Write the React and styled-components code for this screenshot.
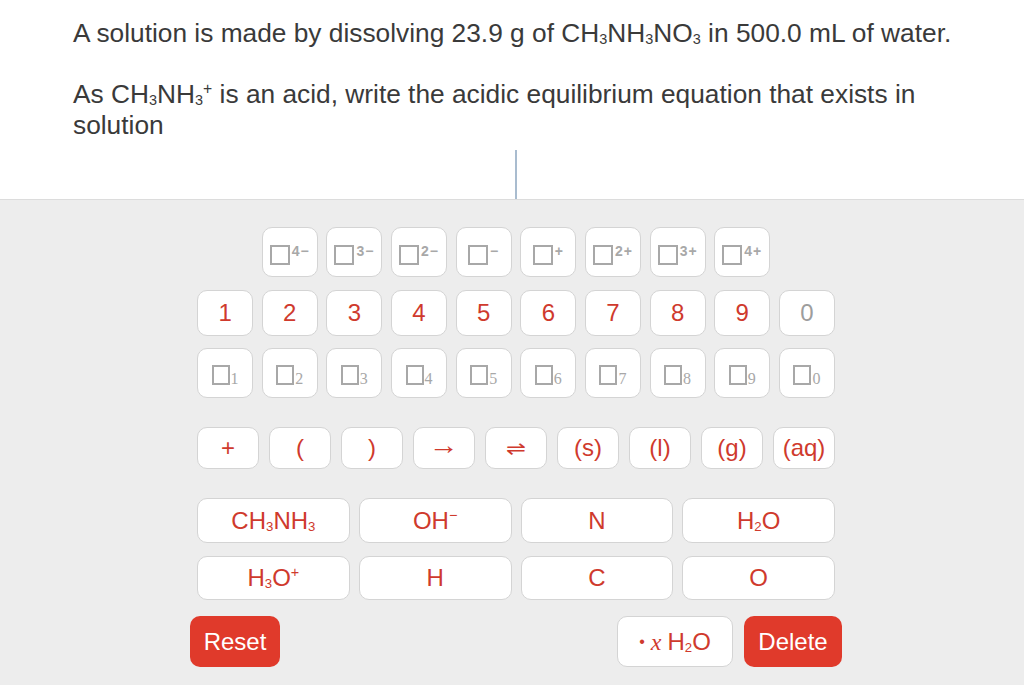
import React from 'react';
import styled, { createGlobalStyle } from 'styled-components';

const RED = '#cf3a2d';
const GREY = '#9d9d9d';

const GlobalStyle = createGlobalStyle`
  body {
    margin: 0;
    background: #fff;
    font-family: "Liberation Sans", Arial, sans-serif;
  }
`;

const Question = styled.div`
  padding: 18px 60px 0 73px;
  color: #3a3a3a;
  font-size: 26.3px;
  line-height: 31px;
`;

const Para = styled.p`
  margin: 0 0 ${(p) => p.$gap || 0}px;
`;

const Sub = styled.span`
  font-size: 0.55em;
  line-height: 0;
  vertical-align: -0.12em;
`;

const Sup = styled.span`
  font-size: 0.6em;
  line-height: 0;
  vertical-align: 0.6em;
`;

const AnswerArea = styled.div`
  height: 58px;
  padding-left: 8px;
  display: flex;
  justify-content: center;
  align-items: flex-end;
`;

const Cursor = styled.div`
  width: 2px;
  height: 49px;
  background: #a9bccf;
`;

const Panel = styled.div`
  background: #ededed;
  border-top: 1px solid #dcdcdc;
  min-height: 486px;
  box-sizing: border-box;
  padding: 27px 0 0 8px;
`;

const Keypad = styled.div`
  width: 638px;
  margin: 0 auto;
  display: flex;
  flex-direction: column;
`;

const Row = styled.div`
  display: grid;
  grid-template-columns: repeat(${(p) => p.$cols}, 1fr);
  column-gap: ${(p) => p.$gap}px;
  height: ${(p) => p.$h}px;
  margin-top: ${(p) => p.$mt || 0}px;
`;

const Key = styled.button`
  background: #fff;
  border: 1px solid #d4d4d4;
  border-radius: 10px;
  padding: 0;
  margin: 0;
  display: flex;
  align-items: center;
  justify-content: center;
  color: ${(p) => p.$color || RED};
  font-family: "Liberation Sans", Arial, sans-serif;
  font-size: 24px;
  line-height: 1;
  &:first-child {
    grid-column-start: ${(p) => p.$start || 'auto'};
  }
`;

const Label = styled.span`
  white-space: nowrap;
`;

const Box = styled.span`
  display: inline-block;
  width: ${(p) => p.$w || 20}px;
  height: 20px;
  border: 2px solid #a8a8a8;
  box-sizing: border-box;
`;

const ChargeMark = styled.span`
  align-self: flex-start;
  margin-top: -1px;
  margin-left: 2px;
  font-size: 14px;
  font-weight: bold;
  color: #a8a8a8;
  letter-spacing: 1px;
`;

const ChargeInner = styled.span`
  display: inline-flex;
  align-items: flex-start;
  margin-top: 5px;
`;

const IndexInner = styled.span`
  display: inline-flex;
  align-items: flex-end;
  margin-top: 4px;
`;

const IndexMark = styled.span`
  font-family: "Liberation Serif", "Times New Roman", serif;
  font-size: 16px;
  color: #a8a8a8;
  margin-left: 1px;
  position: relative;
  top: 2px;
`;

const Arrow = styled.span`
  font-family: ${(p) => (p.$serif ? '"Liberation Serif", "DejaVu Serif"' : '"DejaVu Sans"')}, serif;
  font-size: ${(p) => (p.$serif ? 26 : 19)}px;
  transform: scaleX(${(p) => (p.$serif ? 1.15 : 1.25)});
  margin-top: ${(p) => (p.$serif ? -4 : 0)}px;
`;

const ActionRow = styled.div`
  display: flex;
  align-items: center;
  gap: 11px;
  margin: 16px -7px 0 -7px;
  height: 51px;
`;

const Spacer = styled.div`
  flex: 1;
`;

const RedButton = styled.button`
  height: 51px;
  width: ${(p) => p.$w}px;
  border: none;
  border-radius: 10px;
  background: #e03a2b;
  color: #fff;
  font-family: "Liberation Sans", Arial, sans-serif;
  font-size: 24px;
  padding: 0;
`;

const HydrateKey = styled.button`
  height: 51px;
  width: 116px;
  background: #fff;
  border: 1px solid #d4d4d4;
  border-radius: 10px;
  color: ${RED};
  font-family: "Liberation Sans", Arial, sans-serif;
  font-size: 24px;
  padding: 0;
`;

const Dot = styled.span`
  font-size: 16px;
  margin-right: 6px;
  vertical-align: 0.15em;
`;

const VarX = styled.span`
  font-family: "Liberation Serif", "Times New Roman", serif;
  font-style: italic;
  margin-right: 6px;
`;

const charges = ['4−', '3−', '2−', '−', '+', '2+', '3+', '4+'];
const digits = ['1', '2', '3', '4', '5', '6', '7', '8', '9', '0'];
const indices = ['1', '2', '3', '4', '5', '6', '7', '8', '9', '0'];

export default function App() {
  return (
    <>
      <GlobalStyle />
      <Question>
        <Para $gap={30}>
          A solution is made by dissolving 23.9 g of CH<Sub>3</Sub>NH<Sub>3</Sub>NO<Sub>3</Sub> in 500.0 mL of water.
        </Para>
        <Para>
          As CH<Sub>3</Sub>NH<Sub>3</Sub><Sup>+</Sup> is an acid, write the acidic equilibrium equation that exists in solution
        </Para>
      </Question>
      <AnswerArea>
        <Cursor />
      </AnswerArea>
      <Panel>
        <Keypad>
          <Row $cols={10} $gap={8.5} $h={50}>
            {charges.map((c, i) => (
              <Key key={c} $start={i === 0 ? 2 : null}>
                <ChargeInner>
                  <Box />
                  <ChargeMark>{c}</ChargeMark>
                </ChargeInner>
              </Key>
            ))}
          </Row>
          <Row $cols={10} $gap={8.5} $h={46} $mt={13}>
            {digits.map((d) => (
              <Key key={d} $color={d === '0' ? GREY : RED}>{d}</Key>
            ))}
          </Row>
          <Row $cols={10} $gap={8.5} $h={50} $mt={12}>
            {indices.map((d) => (
              <Key key={d}>
                <IndexInner>
                  <Box $w={18} />
                  <IndexMark>{d}</IndexMark>
                </IndexInner>
              </Key>
            ))}
          </Row>
          <Row $cols={9} $gap={10} $h={42} $mt={29}>
            <Key>+</Key>
            <Key>(</Key>
            <Key>)</Key>
            <Key><Arrow $serif>→</Arrow></Key>
            <Key><Arrow>⇌</Arrow></Key>
            <Key>(s)</Key>
            <Key>(l)</Key>
            <Key>(g)</Key>
            <Key>(aq)</Key>
          </Row>
          <Row $cols={4} $gap={9} $h={45} $mt={29}>
            <Key><Label>CH<Sub>3</Sub>NH<Sub>3</Sub></Label></Key>
            <Key><Label>OH<Sup>−</Sup></Label></Key>
            <Key>N</Key>
            <Key><Label>H<Sub>2</Sub>O</Label></Key>
          </Row>
          <Row $cols={4} $gap={9} $h={44} $mt={13}>
            <Key><Label>H<Sub>3</Sub>O<Sup>+</Sup></Label></Key>
            <Key>H</Key>
            <Key>C</Key>
            <Key>O</Key>
          </Row>
          <ActionRow>
            <RedButton $w={90}>Reset</RedButton>
            <Spacer />
            <HydrateKey>
              <Label>
                <Dot>•</Dot>
                <VarX>x</VarX>
                H<Sub>2</Sub>O
              </Label>
            </HydrateKey>
            <RedButton $w={98}>Delete</RedButton>
          </ActionRow>
        </Keypad>
      </Panel>
    </>
  );
}
